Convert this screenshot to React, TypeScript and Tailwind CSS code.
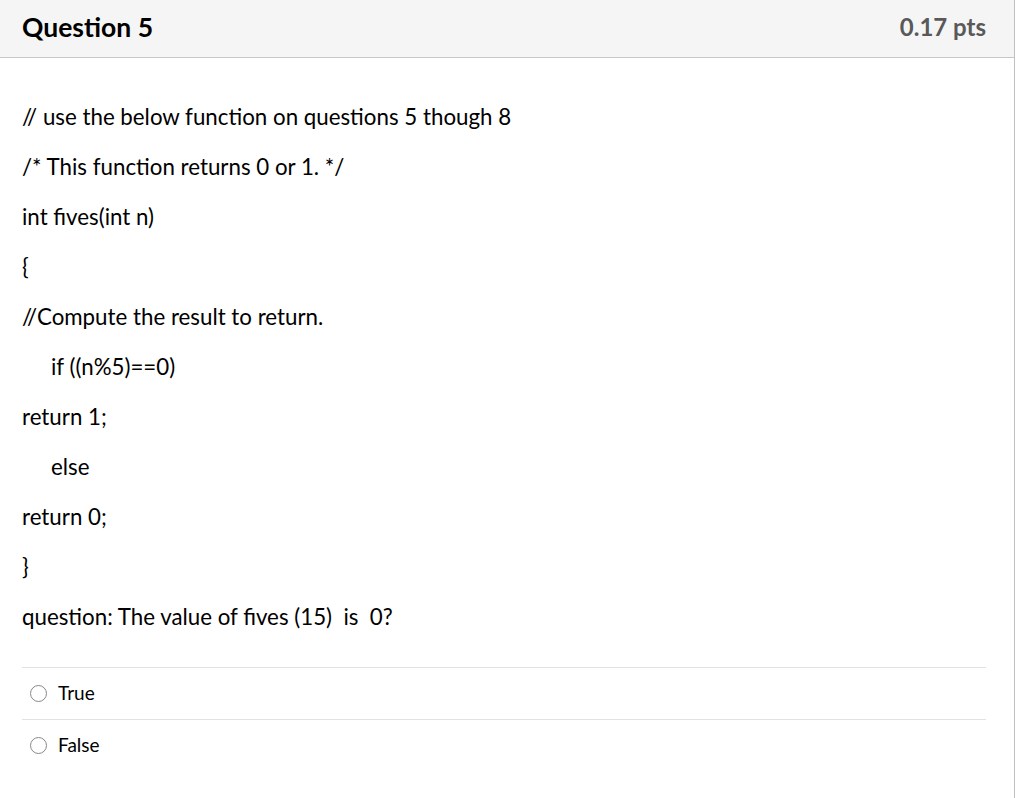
export default function App() {
  const lines: { text: string; indent?: boolean }[] = [
    { text: "// use the below function on questions 5 though 8" },
    { text: "/* This function returns 0 or 1. */" },
    { text: "int fives(int n)" },
    { text: "{" },
    { text: "//Compute the result to return." },
    { text: "if ((n%5)==0)", indent: true },
    { text: "return 1;" },
    { text: "else", indent: true },
    { text: "return 0;" },
    { text: "}" },
    { text: "question: The value of fives (15)  is  0?" },
  ];

  const answers = ["True", "False"];

  return (
    <div className="w-[1015px] min-h-[798px] bg-white border-r border-[#c0c0c0] text-black" style={{ fontFamily: "Lato, 'Liberation Sans', sans-serif" }}>
      {/* Header */}
      <div className="flex items-center justify-between h-[58px] bg-[#f5f5f5] border-b border-[#c7c7c7] pl-[22px] pr-[28px]">
        <h2 className="text-[26.5px] font-bold leading-none pb-[3px]">Question 5</h2>
        <span className="text-[24px] font-bold text-[#595959] leading-none pb-[3px]">0.17 pts</span>
      </div>

      {/* Body */}
      <div className="pl-[22px] pr-[28px] pt-[44px]">
        {lines.map((l, i) => (
          <p
            key={i}
            className={`text-[22.3px] leading-[30px] mb-[20px] whitespace-pre ${l.indent ? "pl-[29px]" : ""}`}
          >
            {l.text}
          </p>
        ))}

        <div className="mt-[35px]">
          {answers.map((a) => (
            <div key={a} className="flex items-center h-[52px] border-t border-[#e2e2e2] pl-[8px]">
              <span className="w-[17px] h-[17px] rounded-full border border-[#888] bg-white" />
              <span className="ml-[11px] text-[19px] leading-none pb-[2px]">{a}</span>
            </div>
          ))}
        </div>
      </div>
    </div>
  );
}
